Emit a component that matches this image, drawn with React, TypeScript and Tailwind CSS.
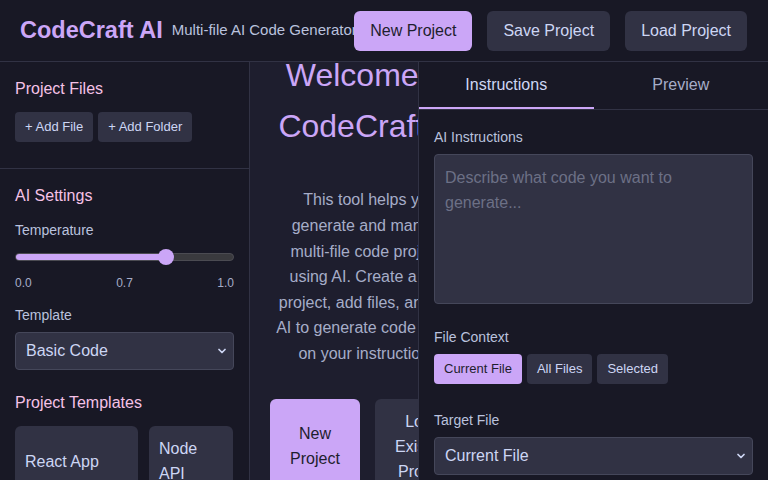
import { ChevronDown } from "lucide-react";

function FakeSelect({ value }: { value: string }) {
  return (
    <div className="flex h-[38px] items-center justify-between rounded-[4px] border border-[#45475a] bg-[#313244] pl-[10px] pr-[5px] text-base text-[#cdd6f4]">
      <span>{value}</span>
      <ChevronDown size={12} strokeWidth={3.5} />
    </div>
  );
}

function Label({ children }: { children: React.ReactNode }) {
  return <div className="text-sm leading-5 text-[#bac2de]">{children}</div>;
}

function SectionTitle({ children }: { children: React.ReactNode }) {
  return <h3 className="text-base font-medium leading-6 text-[#f5c2e7]">{children}</h3>;
}

export default function App() {
  return (
    <div className="flex h-[480px] w-[768px] flex-col overflow-hidden bg-[#1e1e2e] font-['Liberation_Sans',Arial,sans-serif] text-[#cdd6f4]">
      {/* Header */}
      <header className="flex h-[62px] shrink-0 items-center justify-between border-b border-[#313244] bg-[#181825] pl-5 pr-[21px]">
        <div className="flex min-w-0 items-center gap-[9px] whitespace-nowrap">
          <h1 className="text-[23.5px] font-semibold text-[#cba6f7]">CodeCraft AI</h1>
          <span className="text-[15px] text-[#bac2de]">Multi-file AI Code Generator</span>
        </div>
        <div className="flex shrink-0 gap-[15px]">
          <button className="h-10 rounded-md bg-[#cba6f7] px-4 text-base text-[#1e1e2e]">New Project</button>
          <button className="h-10 rounded-md bg-[#313244] px-4 text-base text-[#cdd6f4]">Save Project</button>
          <button className="h-10 rounded-md bg-[#313244] px-4 text-base text-[#cdd6f4]">Load Project</button>
        </div>
      </header>

      <div className="flex min-h-0 flex-1 overflow-hidden">
        {/* Sidebar */}
        <aside className="w-[250px] shrink-0 border-r border-[#313244] bg-[#181825]">
          <div className="border-b border-[#313244] px-[15px] pt-[15px] pb-[26px]">
            <SectionTitle>Project Files</SectionTitle>
            <div className="mt-[11px] flex gap-[5px]">
              <button className="h-[30px] rounded-[4px] bg-[#313244] px-[10px] text-[13px] text-[#cdd6f4]">+ Add File</button>
              <button className="h-[30px] rounded-[4px] bg-[#313244] px-[10px] text-[13px] text-[#cdd6f4]">+ Add Folder</button>
            </div>
          </div>

          <div className="px-[15px] pt-[15px]">
            <SectionTitle>AI Settings</SectionTitle>
            <div className="mt-3">
              <Label>Temperature</Label>
            </div>
            <div className="relative mt-[9px] flex h-4 items-center">
              <div className="h-2 w-full overflow-hidden rounded-full border border-[#4b4b52] bg-[#3a3a3e]">
                <div className="h-full w-[69%] bg-[#cba6f7]" />
              </div>
              <div className="absolute left-[calc(69%-8px)] top-0 h-4 w-4 rounded-full bg-[#cba6f7]" />
            </div>
            <div className="mt-[10px] flex justify-between text-xs leading-4 text-[#a6adc8]">
              <span>0.0</span>
              <span>0.7</span>
              <span>1.0</span>
            </div>
            <div className="mt-[14px]">
              <Label>Template</Label>
            </div>
            <div className="mt-[7px]">
              <FakeSelect value="Basic Code" />
            </div>

            <div className="mt-[21px]">
              <SectionTitle>Project Templates</SectionTitle>
            </div>
            <div className="mt-[11px] flex gap-[11px]">
              <button className="h-[70px] w-[123px] rounded-md bg-[#313244] px-[10px] text-left text-base leading-[25px] text-[#cdd6f4]">
                React App
              </button>
              <button className="h-[70px] w-[84px] rounded-md bg-[#313244] px-[10px] text-left text-base leading-[25px] text-[#cdd6f4]">
                Node API
              </button>
            </div>
          </div>
        </aside>

        {/* Welcome */}
        <main className="flex min-w-0 flex-1 flex-col justify-center bg-[#1e1e2e] pl-5 pt-[2px]">
          <div className="w-[200px] shrink-0 text-center">
            <h2 className="text-[32px] leading-[51px] text-[#cba6f7]">Welcome to CodeCraft AI</h2>
            <p className="mt-[35px] text-base leading-[25.6px] text-[#a6adc8]">
              This tool helps you generate and manage multi-file code projects using AI. Create a new project, add files, and use AI to generate code based on your instructions.
            </p>
            <div className="mt-8 flex gap-[15px]">
              <button className="w-[90px] shrink-0 rounded-md bg-[#cba6f7] px-5 py-[10px] text-base leading-[25px] text-[#1e1e2e]">
                New Project
              </button>
              <button className="flex-1 rounded-md bg-[#313244] px-5 py-[10px] text-base leading-[25px] text-[#cdd6f4]">
                Load Existing Project
              </button>
            </div>
          </div>
        </main>

        {/* Right panel */}
        <section className="w-[350px] shrink-0 border-l border-[#313244] bg-[#181825]">
          <div className="flex border-b border-[#313244]">
            <button className="h-[47px] flex-1 border-b-2 border-[#cba6f7] text-base text-[#cdd6f4]">Instructions</button>
            <button className="h-[47px] flex-1 border-b-2 border-transparent text-base text-[#a6adc8]">Preview</button>
          </div>
          <div className="px-[15px] pt-[17px]">
            <Label>AI Instructions</Label>
            <textarea
              className="mt-[7px] block h-[150px] w-full resize-none rounded-[4px] border border-[#45475a] bg-[#313244] p-[10px] text-base leading-[25px] text-[#cdd6f4] outline-none placeholder:text-[#6c7086]"
              placeholder="Describe what code you want to generate..."
            />
            <div className="mt-[23px]">
              <Label>File Context</Label>
            </div>
            <div className="mt-[7px] flex gap-[5px]">
              <button className="h-[30px] rounded-[4px] bg-[#cba6f7] px-[10px] text-[13px] text-[#1e1e2e]">Current File</button>
              <button className="h-[30px] rounded-[4px] bg-[#313244] px-[10px] text-[13px] text-[#cdd6f4]">All Files</button>
              <button className="h-[30px] rounded-[4px] bg-[#313244] px-[10px] text-[13px] text-[#cdd6f4]">Selected</button>
            </div>
            <div className="mt-[26px]">
              <Label>Target File</Label>
            </div>
            <div className="mt-[7px]">
              <FakeSelect value="Current File" />
            </div>
          </div>
        </section>
      </div>
    </div>
  );
}
